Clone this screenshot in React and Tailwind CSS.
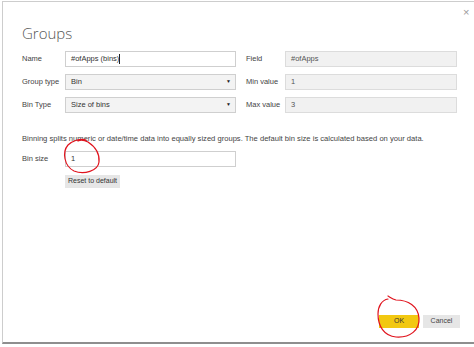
import React from 'react';

const font = { fontFamily: '"Liberation Sans", Arial, sans-serif' };

function TextBox({ value, cursor }) {
  return (
    <div className="w-[171px] h-[16px] border border-[#cfcfcf] bg-white flex items-center pl-[5px] text-[7.5px] text-[#333]">
      {value}
      {cursor && <span className="inline-block w-px h-[10px] bg-[#222]" />}
    </div>
  );
}

function Select({ value }) {
  return (
    <div className="w-[171px] h-[16px] border border-[#cfcfcf] bg-[#f3f3f3] flex items-center justify-between pl-[5px] pr-[4px] text-[7.5px] text-[#333]">
      <span>{value}</span>
      <span className="text-[5px] text-[#222]">▼</span>
    </div>
  );
}

function ReadOnly({ value }) {
  return (
    <div className="w-[172px] h-[16px] border border-[#dcdcdc] bg-[#f1f1f1] flex items-center pl-[5px] text-[7.5px] text-[#555]">
      {value}
    </div>
  );
}

function Row({ label, labelW, children }) {
  return (
    <div className="flex items-center">
      <div className="text-[7.5px] text-[#444]" style={{ width: labelW }}>{label}</div>
      {children}
    </div>
  );
}

export default function App() {
  return (
    <div className="relative w-[474px] h-[347px] bg-white overflow-hidden" style={font}>
      <div className="relative ml-[2px] mt-[1px] w-[490px] h-[343px] border border-[#cdcdcd] border-b-[2px] border-b-[#8e8e8e] bg-white">
        <div className="absolute left-[460px] top-[5px] text-[11px] text-[#9a9a9a] leading-none">×</div>

        <div
          className="pl-[19px] pt-[21px] text-[15px] leading-[21px] font-light text-[#555]"
          style={{ fontFamily: '"Open Sans", "Liberation Sans", sans-serif' }}
        >
          Groups
        </div>

        <div className="flex gap-[10px] pl-[19px] mt-[7px]">
          <div className="flex flex-col gap-[7px]">
            <Row label="Name" labelW={43}><TextBox value="#ofApps (bins)" cursor /></Row>
            <Row label="Group type" labelW={43}><Select value="Bin" /></Row>
            <Row label="Bin Type" labelW={43}><Select value="Size of bins" /></Row>
          </div>
          <div className="flex flex-col gap-[7px]">
            <Row label="Field" labelW={39}><ReadOnly value="#ofApps" /></Row>
            <Row label="Min value" labelW={39}><ReadOnly value="1" /></Row>
            <Row label="Max value" labelW={39}><ReadOnly value="3" /></Row>
          </div>
        </div>

        <div className="pl-[19px] mt-[21px] text-[7.6px] leading-[10px] text-[#444] whitespace-nowrap">
          Binning splits numeric or date/time data into equally sized groups. The default bin size is calculated based on your data.
        </div>

        <div className="pl-[19px] mt-[7px]">
          <Row label="Bin size" labelW={43}><TextBox value="1" /></Row>
        </div>

        <div className="flex pl-[62px] mt-[8px]">
          <div className="flex items-center h-[13px] px-[3px] bg-[#e6e6e6] text-[7px] text-[#333]">Reset to default</div>
        </div>

        <div className="absolute left-[376px] top-[313px] flex gap-[4px]">
          <div className="w-[40px] h-[13px] bg-[#f2c811] flex items-center justify-center text-[7px] text-[#333]">OK</div>
          <div className="w-[37px] h-[13px] bg-[#e6e6e6] flex items-center justify-center text-[7px] text-[#444]">Cancel</div>
        </div>
      </div>

      <svg className="absolute inset-0 pointer-events-none" width="474" height="347" viewBox="0 0 474 347" fill="none" stroke="#e0141e" strokeWidth="1.2" strokeLinecap="round" strokeLinejoin="round">
        <path d="M86 140 C 80 138, 72 141, 68 145 C 62 152, 64 166, 74 171 C 84 175, 98 171, 99 162 C 100 153, 94 146, 88 142 C 84 140, 80 140, 78 141" />
        <path d="M388 299 C 382 300, 378 306, 378 314 C 378 326, 384 336, 396 337 C 410 338, 420 330, 419 318 C 418 306, 408 300, 396 300 C 392 299, 390 297, 388 296" />
      </svg>
    </div>
  );
}
